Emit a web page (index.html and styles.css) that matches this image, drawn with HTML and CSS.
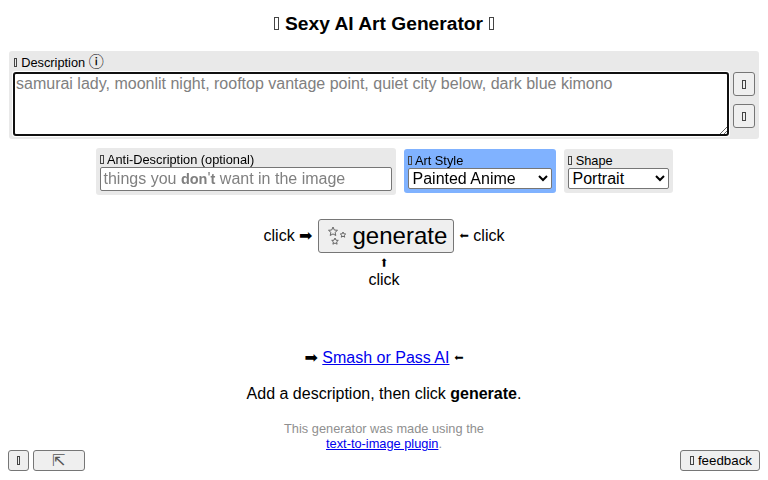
FILE: index.html
```html
<!DOCTYPE html>
<html lang="en">
<head>
    <meta charset="UTF-8">
    <meta name="viewport" content="width=device-width, initial-scale=1.0">
    <title>Sexy AI Art Generator</title>
    <link rel="stylesheet" href="styles.css">
</head>
<body>
    <h1 class="title"><span class="tofu"></span> Sexy AI Art Generator <span class="tofu"></span></h1>

    <div class="panel description">
        <label class="panel-label" for="descInput"><span class="tofu"></span> Description <span class="info">ⓘ</span></label>
        <div class="description-row">
            <textarea id="descInput" class="desc-input" autofocus placeholder="samurai lady, moonlit night, rooftop vantage point, quiet city below, dark blue kimono"></textarea>
            <div class="side-buttons">
                <button class="small-btn"><span class="tofu"></span></button>
                <button class="small-btn"><span class="tofu"></span></button>
            </div>
        </div>
    </div>

    <div class="options">
        <div class="panel option anti">
            <label class="option-label"><span class="tofu"></span> Anti-Description (optional)</label>
            <div class="anti-input">things you <b>don</b>'<b>t</b> want in the image</div>
        </div>
        <div class="panel option style-option">
            <label class="option-label" for="styleSelect"><span class="tofu"></span> Art Style</label>
            <select id="styleSelect" class="style-select"><option>Painted Anime</option></select>
        </div>
        <div class="panel option shape-option">
            <label class="option-label" for="shapeSelect"><span class="tofu"></span> Shape</label>
            <select id="shapeSelect" class="shape-select"><option>Portrait</option></select>
        </div>
    </div>

    <div class="generate-row">
        <span class="row-text">click <span class="sym">➡</span></span>
        <button class="generate-btn">
            <svg class="sparkle" width="20" height="24" viewBox="0 0 20 24" fill="none" stroke="#666" stroke-width="1">
                <path d="M6 3l1.3 3 3.2.3-2.4 2.1.7 3.1L6 9.9l-2.8 1.6.7-3.1-2.4-2.1 3.2-.3z"/>
                <path d="M16 8l.8 1.8 1.9.2-1.4 1.3.4 1.9-1.7-1-1.7 1 .4-1.9-1.4-1.3 1.9-.2z"/>
                <path d="M8 14l1 2.2 2.3.2-1.7 1.5.5 2.3L8 19l-2.1 1.2.5-2.3-1.7-1.5 2.3-.2z"/>
            </svg>
            <span>generate</span>
        </button>
        <span class="row-text"><span class="mono">⬅</span> click</span>
    </div>
    <div class="click-below">
        <div class="up-arrow mono">⬆</div>
        <div>click</div>
    </div>

    <p class="smash"><span class="sym">➡</span> <a href="#">Smash or Pass AI</a> <span class="mono">⬅</span></p>
    <p class="hint">Add a description, then click <b>generate</b>.</p>

    <div class="footer">
        <div class="footer-left">
            <button class="foot-btn"><span class="tofu"></span></button>
            <button class="foot-btn wide">⇱</button>
        </div>
        <div class="credit">This generator was made using the<br><a href="#">text-to-image plugin</a>.</div>
        <div class="footer-right">
            <button class="foot-btn feedback"><span class="tofu"></span> feedback</button>
        </div>
    </div>
</body>
</html>
```

FILE: styles.css
```css
body {
    font-family: 'Liberation Sans', Arial, sans-serif;
    font-size: 16px;
    margin: 0;
    padding: 0 8px;
    height: 480px;
    box-sizing: border-box;
    overflow: hidden;
    color: #000;
    background: #fff;
}
/* missing-glyph box, same width as the font's empty rectangle */
.tofu {
    display: inline-block;
    box-sizing: border-box;
    width: 0.28em;
    height: 0.68em;
    margin: 0 0.04em;
    border: 1px solid #444;
}
.sym {
    font-family: 'DejaVu Sans', sans-serif;
}
.mono {
    font-family: 'DejaVu Sans Mono', monospace;
}
.title {
    font-size: 19.2px;
    font-weight: bold;
    text-align: center;
    margin: 0;
    padding-top: 13px;
    line-height: 22px;
    height: 38px;
}
.panel {
    background: #e9e9e9;
    border-radius: 3px;
}
.description {
    margin: 0 1px;
    padding: 3px 4px 4px;
    height: 88px;
    box-sizing: border-box;
}
.panel-label {
    display: block;
    font-size: 12.8px;
    line-height: 17px;
    height: 18px;
}
.info {
    font-family: 'Noto Sans CJK SC', sans-serif;
    font-size: 15px;
    font-weight: 500;
    line-height: 13px;
}
.description-row {
    display: flex;
    gap: 4px;
}
.desc-input {
    flex: 1;
    height: 64px;
    box-sizing: border-box;
    font-family: inherit;
    font-size: 16px;
    margin: 0;
}
.desc-input::placeholder {
    color: #808080;
}
.side-buttons {
    display: flex;
    flex-direction: column;
    gap: 8px;
}
.small-btn {
    width: 22px;
    height: 24px;
    padding: 0;
    font-size: 13px;
    background: #efefef;
    border: 1px solid #767676;
    border-radius: 3px;
    font-family: inherit;
}
.options {
    display: flex;
    justify-content: center;
    align-items: flex-start;
    gap: 8px;
    margin-top: 9px;
}
.option {
    padding: 4px;
    display: flex;
    flex-direction: column;
}
.option-label {
    font-size: 12.8px;
    line-height: 15px;
}
.anti {
    width: 300px;
    height: 47px;
    box-sizing: border-box;
}
.anti-input {
    border: 1px solid #767676;
    border-radius: 2px;
    height: 24px;
    line-height: 22px;
    padding: 0 3px;
    background: #fff;
    color: #808080;
    font-size: 16px;
    box-sizing: border-box;
}
.anti-input b {
    font-size: 14.5px;
}
.style-option,
.shape-option {
    margin-top: 1px;
}
.style-option {
    background: #80b2ff;
}
.style-select,
.shape-select {
    font-family: inherit;
    font-size: 16px;
    height: 21px;
    margin: 0;
    background: #fff;
    border: 1px solid #767676;
    border-radius: 2px;
}
.style-select {
    width: 144px;
}
.shape-select {
    width: 101px;
}
.generate-row {
    display: flex;
    justify-content: center;
    align-items: center;
    gap: 5px;
    margin-top: 24px;
}
.row-text {
    margin-bottom: 2px;
}
.generate-btn {
    display: flex;
    align-items: center;
    gap: 6px;
    font-family: inherit;
    font-size: 24px;
    height: 34px;
    padding: 0 6px 0 8px;
    background: #efefef;
    border: 1px solid #767676;
    border-radius: 3px;
    color: #000;
}
.click-below {
    text-align: center;
    line-height: 18px;
    margin-top: 2px;
}
.up-arrow {
    font-size: 16px;
    line-height: 16px;
}
.smash,
.hint {
    text-align: center;
    margin: 0;
}
.smash {
    margin-top: 59px;
}
.hint {
    margin-top: 18px;
}
.footer {
    display: grid;
    grid-template-columns: 1fr auto 1fr;
    align-items: end;
    margin-top: 18px;
}
.footer-left {
    display: flex;
    gap: 4px;
}
.footer-right {
    display: flex;
    justify-content: flex-end;
}
.foot-btn {
    font-family: inherit;
    font-size: 13.33px;
    height: 21px;
    padding: 0 7px;
    background: #efefef;
    border: 1px solid #767676;
    border-radius: 3px;
    color: #000;
}
.foot-btn.wide {
    width: 52px;
    font-family: 'DejaVu Sans', sans-serif;
    font-size: 16px;
    color: #555;
}
.foot-btn.feedback {
    padding-left: 8px;
}
.credit {
    text-align: center;
    font-size: 12.8px;
    line-height: 15px;
    color: #8f8f8f;
    padding-bottom: 20px;
}
```
